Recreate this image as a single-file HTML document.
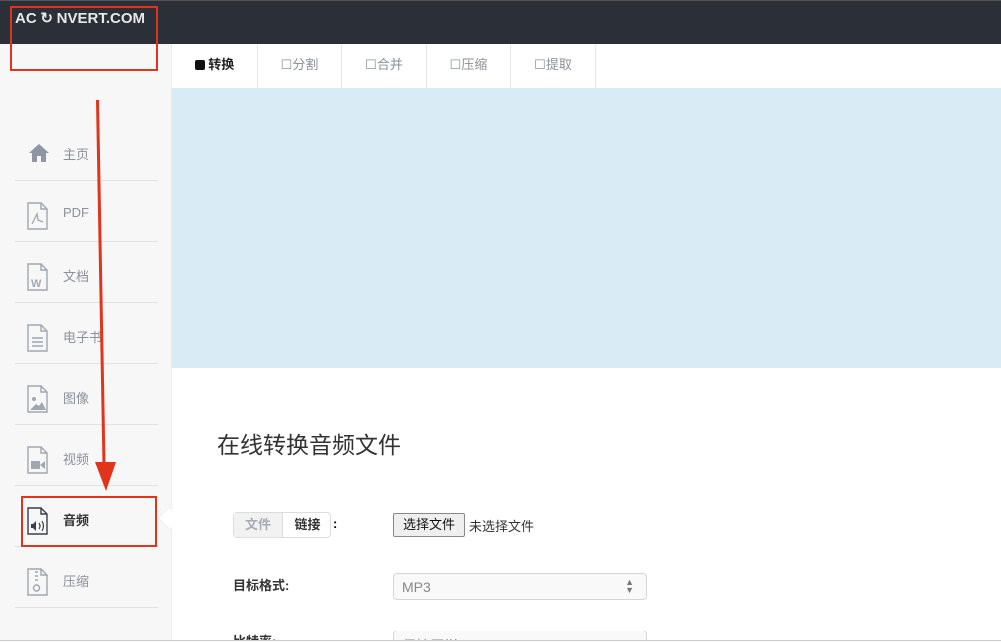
<!DOCTYPE html>
<html style="overflow:hidden;height:643px"><head><meta charset="utf-8"><style>
*{margin:0;padding:0;box-sizing:border-box}
body{width:1001px;height:643px;overflow:hidden;background:#fff;font-family:"Liberation Sans","Noto Sans CJK SC",sans-serif;position:relative}
.hdr{position:absolute;left:0;top:0;width:1001px;height:44px;background:#2b2f38;border-top:1px solid #555}
.logo{position:absolute;left:15px;top:8px;color:#e8e8e8;font-weight:bold;font-size:15px;letter-spacing:0}
.side{position:absolute;left:0;top:44px;width:172px;height:599px;background:#f7f7f7;border-right:1px solid #ececec}
.item{position:absolute;left:15px;width:143px;height:61px;border-bottom:1px solid #e2e2e2}
.item svg{position:absolute;left:12px;top:21px}
.item span{position:absolute;left:48px;top:24px;font-size:13px;color:#8b919b}
.tabs{position:absolute;left:172px;top:44px;height:44px;width:829px;background:#fff}
.tab{position:absolute;top:0;height:44px;border-right:1px solid #e6e6e6;font-size:13px;color:#8a9099;line-height:42px;text-align:center}
.blue{position:absolute;left:172px;top:88px;width:829px;height:280px;background:#d9ecf5}
h1{position:absolute;left:217px;top:426px;font-size:23px;font-weight:normal;color:#333}
.lbl{position:absolute;left:233px;font-size:13px;font-weight:bold;color:#333}
.sel{position:absolute;left:393px;width:254px;height:27px;border:1px solid #d7d7d7;border-radius:4px;background:#f9f9f9;color:#888;font-size:14px;padding:5px 8px}
.red{position:absolute;border:2px solid #e0341c}
</style></head><body>
<div class="hdr"><div class="logo">AC<span style="display:inline-block;width:20px;text-align:center">↻</span>NVERT.COM</div></div>
<div class="side">
<div class="item" style="top:76px"><svg width="24" height="22" viewBox="0 0 24 22" style="top:22px"><path d="M2 11 L12 2 L22 11 L19 11 L19 20 L14 20 L14 14 L10 14 L10 20 L5 20 L5 11Z" fill="#8e96a3"/></svg><span>主页</span></div>
<div class="item" style="top:137px"><svg width="22" height="28" viewBox="0 0 22 28"><path d="M1 1h13l6 6v20H1z M14 1v6h6" fill="none" stroke="#a0a7b1" stroke-width="1.4"/><path d="M5 22 L10 12 L11 18 L16 20" fill="none" stroke="#a0a7b1" stroke-width="1.3"/></svg><span>PDF</span></div>
<div class="item" style="top:198px"><svg width="22" height="28" viewBox="0 0 22 28"><path d="M1 1h13l6 6v20H1z M14 1v6h6" fill="none" stroke="#a0a7b1" stroke-width="1.4"/><text x="4" y="24" font-size="11" font-weight="bold" fill="#a0a7b1" font-family="Liberation Sans">W</text></svg><span>文档</span></div>
<div class="item" style="top:259px"><svg width="22" height="28" viewBox="0 0 22 28"><path d="M1 1h13l6 6v20H1z M14 1v6h6 M5 14h11 M5 18h11 M5 22h11" fill="none" stroke="#a0a7b1" stroke-width="1.4"/></svg><span>电子书</span></div>
<div class="item" style="top:320px"><svg width="22" height="28" viewBox="0 0 22 28"><path d="M1 1h13l6 6v20H1z M14 1v6h6" fill="none" stroke="#a0a7b1" stroke-width="1.4"/><circle cx="7" cy="14" r="2" fill="#a0a7b1"/><path d="M3 25 L9 19 L12 21 L15 17 L19 25Z" fill="#a0a7b1"/></svg><span>图像</span></div>
<div class="item" style="top:381px"><svg width="22" height="28" viewBox="0 0 22 28"><path d="M1 1h13l6 6v20H1z M14 1v6h6" fill="none" stroke="#a0a7b1" stroke-width="1.4"/><rect x="4" y="15" width="9" height="8" fill="#a0a7b1"/><path d="M13 19 L18 15 V23Z" fill="#a0a7b1"/></svg><span>视频</span></div>
<div class="item" style="top:442px"><svg width="22" height="28" viewBox="0 0 22 28"><path d="M1 1h13l6 6v20H1z M14 1v6h6" fill="none" stroke="#3a3f48" stroke-width="1.4"/><path d="M4 17h2l3-3v10l-3-3H4z" fill="#3a3f48"/><path d="M12 16q2 3 0 6 M15 14q3 5 0 10" fill="none" stroke="#3a3f48" stroke-width="1.2"/></svg><span style="color:#333;font-weight:bold">音频</span></div>
<div class="item" style="top:503px"><svg width="22" height="28" viewBox="0 0 22 28"><path d="M1 1h13l6 6v20H1z M14 1v6h6" fill="none" stroke="#a0a7b1" stroke-width="1.4"/><path d="M8 4h3 M8 8h3 M8 12h3" stroke="#a0a7b1" stroke-width="1.4"/><circle cx="9.5" cy="20" r="3" fill="none" stroke="#a0a7b1" stroke-width="1.4"/></svg><span>压缩</span></div>
</div>
<div style="position:absolute;left:161px;top:510px;width:16px;height:16px;background:#fff;transform:rotate(45deg);border-left:1px solid #eee;border-bottom:1px solid #eee"></div>
<div class="tabs">
<div class="tab" style="left:0;width:86px;color:#222;font-weight:bold"><span style="display:inline-block;width:10px;height:10px;background:#111;border-radius:2px;vertical-align:-1px"></span> 转换</div>
<div class="tab" style="left:86px;width:84px">☐分割</div>
<div class="tab" style="left:170px;width:85px">☐合并</div>
<div class="tab" style="left:255px;width:84px">☐压缩</div>
<div class="tab" style="left:339px;width:85px">☐提取</div>
</div>
<div class="blue"></div>
<h1>在线转换音频文件</h1>
<div style="position:absolute;left:233px;top:512px;width:98px;height:26px;border:1px solid #ddd;border-radius:4px;font-size:13px;font-weight:bold;line-height:24px">
<span style="position:absolute;left:0;width:49px;height:24px;background:#f2f2f2;color:#a8adb5;text-align:center;border-right:1px solid #ddd">文件</span>
<span style="position:absolute;left:50px;width:47px;text-align:center;color:#333">链接</span></div>
<div style="position:absolute;left:333px;top:516px;font-size:13px;font-weight:bold">:</div>
<div style="position:absolute;left:393px;top:513px;width:72px;height:24px;border:1px solid #888;border-radius:2px;background:#efefef;font-size:13px;line-height:22px;text-align:center;color:#111">选择文件</div>
<div style="position:absolute;left:469px;top:516px;font-size:13px;color:#333">未选择文件</div>
<div class="lbl" style="top:575px">目标格式:</div>
<div class="sel" style="top:573px">MP3<span style="position:absolute;right:12px;top:4px;font-size:9px;line-height:8px;color:#777">▲<br>▼</span></div>
<div style="position:absolute;left:0;top:631px;width:1001px;height:12px;overflow:hidden">
<div class="lbl" style="top:0">比特率:</div>
<div class="sel" style="top:-1px">保持原样</div>
</div>
<div style="position:absolute;left:0;top:640px;width:1001px;height:3px;background:#fff;border-top:1px solid #ccc"></div>
<div class="red" style="left:10px;top:6px;width:148px;height:65px"></div>
<div class="red" style="left:21px;top:496px;width:136px;height:51px"></div>
<svg style="position:absolute;left:0;top:0" width="1001" height="643"><path d="M97.5 100 L104 465" stroke="#e0341c" stroke-width="3"/><path d="M95 462 L116 462 L106 491Z" fill="#e0341c"/></svg>
</body></html>
